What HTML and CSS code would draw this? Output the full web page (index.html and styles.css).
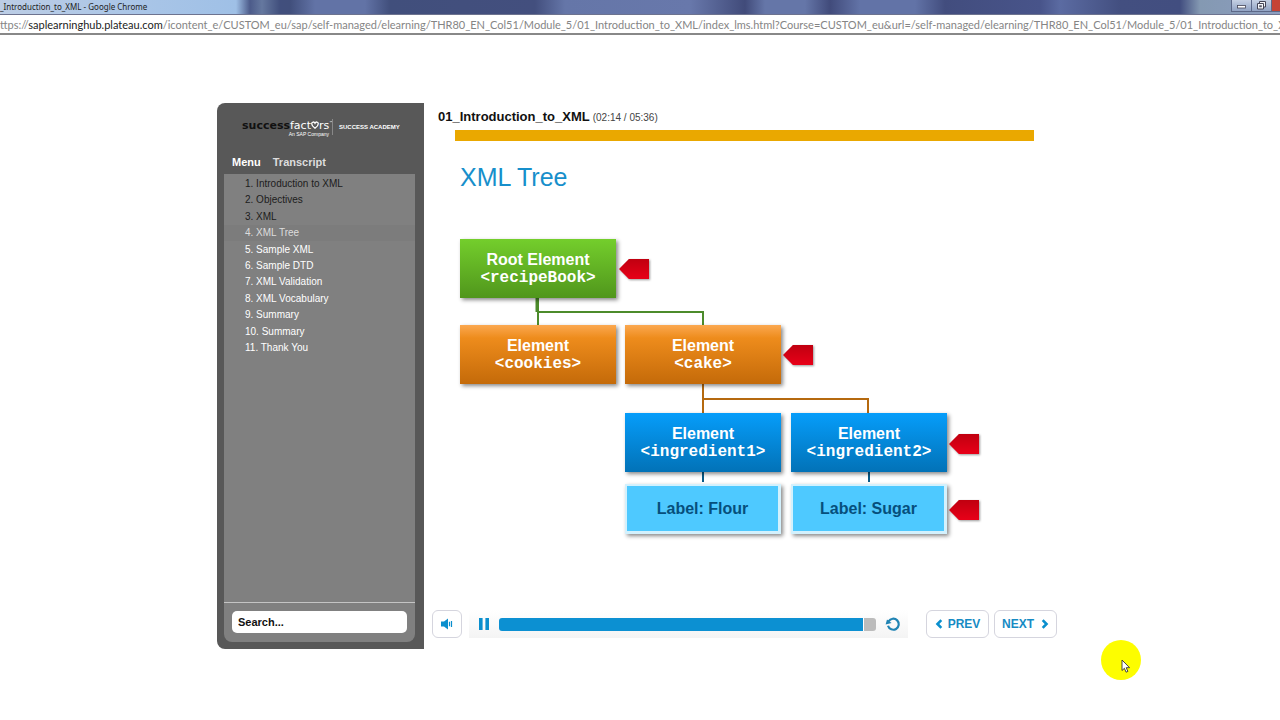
FILE: index.html
```html
<!DOCTYPE html>
<html lang="en">
<head>
<meta charset="utf-8">
<title>01_Introduction_to_XML</title>
<link rel="stylesheet" href="styles.css">
</head>
<body>
<header class="window">
  <div class="titlebar">
    <span class="window-title">_Introduction_to_XML - Google Chrome</span>
    <div class="window-buttons">
      <button class="win-btn" aria-label="Minimize"><svg width="20" height="11" viewBox="0 0 20 11"><rect x="5.500" y="5.500" width="8" height="2.500" fill="#fff" stroke="#445" stroke-width=".8"/></svg></button>
      <button class="win-btn" aria-label="Restore"><svg width="19" height="11" viewBox="0 0 19 11"><path d="M7.500 3V1.500h6v5.500H12M5.500 3.500h6v5.500h-6z" fill="#f4f6fa" stroke="#445"/><path d="M7.500 5.500h2v1.500h-2z" fill="#556" stroke="#556" stroke-width=".5"/></svg></button>
      <button class="win-btn win-close" aria-label="Close"></button>
    </div>
  </div>
  <div class="address">ttps://<span class="host">saplearninghub.plateau.com</span>/icontent_e/CUSTOM_eu/sap/self-managed/elearning/THR80_EN_Col51/Module_5/01_Introduction_to_XML/index_lms.html?Course=CUSTOM_eu&amp;url=/self-managed/elearning/THR80_EN_Col51/Module_5/01_Introduction_to_XM</div>
</header>

<main class="player">
  <aside class="sidebar">
    <div class="brand">
      <div class="logo">
        <div class="wordmark"><span class="success">success</span>fact<svg class="heart" width="8" height="8" viewBox="0 0 8 8"><path d="M4 7.200C1.800 5.600.7 4.300.7 2.700.7.700 3.200.4 4 2.200 4.800.4 7.300.7 7.300 2.700 7.300 4.300 6.200 5.600 4 7.200z" fill="none" stroke="#fff" stroke-width="1.300"/></svg>rs<span class="tm">™</span></div>
        <div class="tagline">An SAP Company</div>
      </div>
      <div class="academy">SUCCESS ACADEMY</div>
    </div>
    <nav class="tabs">
      <button class="tab">Menu</button>
      <button class="tab tab-idle">Transcript</button>
    </nav>
    <div class="panel">
      <ul class="menu">
        <li><a class="seen" href="#1">1. Introduction to XML</a></li>
        <li><a class="seen" href="#2">2. Objectives</a></li>
        <li><a class="seen" href="#3">3. XML</a></li>
        <li class="current"><a href="#4">4. XML Tree</a></li>
        <li><a href="#5">5. Sample XML</a></li>
        <li><a href="#6">6. Sample DTD</a></li>
        <li><a href="#7">7. XML Validation</a></li>
        <li><a href="#8">8. XML Vocabulary</a></li>
        <li><a href="#9">9. Summary</a></li>
        <li><a href="#10">10. Summary</a></li>
        <li><a href="#11">11. Thank You</a></li>
      </ul>
      <form class="search"><input class="search-box" type="text" aria-label="Search" placeholder="Search..."></form>
    </div>
  </aside>

  <section class="content">
    <div class="course"><h1 class="course-title">01_Introduction_to_XML</h1><span class="time">(02:14 / 05:36)</span></div>
    <div class="slide">
      <h2 class="slide-title">XML Tree</h2>
      <div class="diagram">
        <svg class="links" width="520" height="300" viewBox="0 0 520 300" fill="none" stroke-width="2">
          <path d="M78 59v27M78 73H243v13" stroke="#4c8b2b"/><path d="M77 59v14" stroke="#4c8b2b" stroke-width="3"/>
          <path d="M243 145v29M243 160H408v14" stroke="#b5690f"/>
          <path d="M243 233v10M409 233v10" stroke="#075a87"/>
        </svg>
        <div class="node root">Root Element<code>&lt;recipeBook&gt;</code></div>
        <div class="node orange cookies">Element<code>&lt;cookies&gt;</code></div>
        <div class="node orange cake">Element<code>&lt;cake&gt;</code></div>
        <div class="node blue ingredient1">Element<code>&lt;ingredient1&gt;</code></div>
        <div class="node blue ingredient2">Element<code>&lt;ingredient2&gt;</code></div>
        <div class="node label flour">Label: Flour</div>
        <div class="node label sugar">Label: Sugar</div>
        <div class="arrow arrow-root"><i></i></div>
        <div class="arrow arrow-cake"><i></i></div>
        <div class="arrow arrow-ingredient"><i></i></div>
        <div class="arrow arrow-label"><i></i></div>
      </div>
    </div>
    <div class="controls">
      <button class="btn volume" aria-label="Volume"><svg width="14" height="14" viewBox="0 0 14 14"><path d="M1 4.500h3L8 1.500v11L4 9.500H1z" fill="#0a8fce"/><path d="M9.500 4.800v4.400M11.500 4v6" stroke="#0a8fce" stroke-width="1.200"/></svg></button>
      <div class="transport">
        <button class="plain" aria-label="Pause"><svg width="12" height="14" viewBox="0 0 12 14"><path d="M1 1h3.600v12H1zM7.400 1H11v12H7.400z" fill="#0a8fce"/></svg></button>
        <input class="seek" type="range" min="0" max="1000" value="965" aria-label="Position">
        <button class="plain" aria-label="Replay"><svg width="16" height="16" viewBox="0 0 16 16"><path d="M3.600 5.300A5.500 5.500 0 1 1 3 9.800" fill="none" stroke="#2084b4" stroke-width="2.200"/><path d="M.6 8.400 2 3.400 6.600 7z" fill="#2084b4"/></svg></button>
      </div>
      <button class="btn step prev"><svg width="8" height="10" viewBox="0 0 8 10"><path d="M6.300 1.200 2.500 5l3.800 3.800" fill="none" stroke="#0a8fce" stroke-width="2.600"/></svg>PREV</button>
      <button class="btn step next">NEXT<svg width="8" height="10" viewBox="0 0 8 10"><path d="M1.700 1.200 5.500 5 1.700 8.800" fill="none" stroke="#0a8fce" stroke-width="2.600"/></svg></button>
    </div>
  </section>
</main>

<div class="pointer"><svg width="10" height="14" viewBox="0 0 10 14"><path d="M1 1v10.500l2.400-2.200 1.700 3.900 1.800-.8-1.700-3.700h3.400z" fill="#fff" stroke="#333" stroke-width=".9"/></svg></div>
</body>
</html>
```
FILE: styles.css
```css
* { box-sizing: border-box; }
body { margin: 0; background: #fff; font-family: "Liberation Sans", Arial, sans-serif; overflow: hidden; }
button { margin: 0; padding: 0; border: 0; background: none; font: inherit; color: inherit; }
svg { display: block; flex: none; }

.titlebar {
  display: flex; justify-content: space-between; height: 15px; border-bottom: 1px solid #6d738f;
  background: linear-gradient(90deg, #bccde5 0, #a9c5e7 140px, #9fc0e6 236px, #4c5b8a 250px, #65789f 262px, #414f7d 280px, #414f7c 290px, #6273a6 315px, #6273a6 365px, #414f7c 390px, #434f7e 535px, #6576a8 565px, #6878ab 690px, #414b7a 745px, #6576a8 765px, #6576a8 805px, #414b7b 830px, #6273a7 860px, #6273a7 915px, #424d7e 945px, #48548a 1040px, #5b6ba2 1060px, #434f80 1120px, #424e80 1180px, #8499b2 1200px, #8c9dc0 100%);
}
.window-title { font: 8px/14px "Noto Sans", sans-serif; color: #222; white-space: nowrap; }
.window-buttons { display: flex; height: 12px; }
.win-btn { width: 20px; background: linear-gradient(#c5d0e3, #91a3c4); border: solid #5c6888; border-width: 0 0 1px 1px; }
.win-close { width: 9px; background: #c54336; }
.address {
  height: 20px; border-bottom: 2px solid #888; overflow: hidden; white-space: nowrap;
  font: 11px/19px Lato, sans-serif; color: #858585;
}
.host { color: #222; }

.player { display: grid; grid-template-columns: 207px 1fr; padding: 68px 223px 0 217px; }
.sidebar {
  display: flex; flex-direction: column; padding: 0 9px 7px 7px;
  background: #585858; border-radius: 8px 0 0 8px;
}
.brand { display: flex; align-items: flex-start; gap: 3px; padding: 16px 0 0 18px; height: 51px; color: #fff; }
.logo { width: 87px; }
.wordmark { display: flex; align-items: baseline; font: 11px/13px "DejaVu Sans", sans-serif; }
.success { font-weight: bold; color: #111; }
.tm { font-size: 4px; align-self: flex-start; line-height: 8px; }
.tagline { text-align: right; font-size: 5px; line-height: 5px; white-space: nowrap; }
.academy { border-left: 1px solid #888; padding-left: 6px; font-weight: bold; font-size: 6px; line-height: 16px; white-space: nowrap; }
.tabs { display: flex; gap: 12px; padding-left: 8px; font-weight: bold; font-size: 11px; line-height: 16px; height: 20px; color: #fff; align-items: flex-start; }
.tab-idle { color: #ddd; }
.panel { display: flex; flex-direction: column; flex: 1; background: #808080; border-radius: 0 0 8px 8px; }
.menu {
  display: flex; flex-direction: column; justify-content: space-between;
  margin: 0; padding: 2px 0 0; height: 182px; list-style: none; font-size: 10px; line-height: 16px;
}
.menu li { padding-left: 21px; }
.menu a { color: #fff; text-decoration: none; }
.menu .seen { color: #1c1c1c; }
.menu .current { background: #7c7c7c; }
.menu .current a { color: #ddd; }
.search { margin-top: auto; padding: 8px 8px 9px; border-top: 1px solid #c4c4c4; display: flex; }
.search-box { width: 100%; height: 22px; border: 0; border-radius: 5px; padding: 0 6px; background: #fff; font: bold 11px "Liberation Sans", Arial, sans-serif; }
.search-box::placeholder { color: #111; opacity: 1; }

.content { display: flex; flex-direction: column; min-width: 0; }
.course { display: flex; align-items: baseline; gap: 3px; padding: 5px 0 0 14px; line-height: 18px; height: 27px; }
.course-title { margin: 0; font-size: 13px; color: #111; }
.time { font-size: 10px; color: #444; }
.slide { margin: 0 23px 0 31px; border-top: 11px solid #eaa800; padding: 21px 0 0 5px; }
.slide-title { margin: 0; font-weight: normal; font-size: 25px; line-height: 30px; color: #178fcb; }
.diagram { position: relative; height: 364px; margin-top: 47px; }
.links { position: absolute; left: 0; top: 0; }
.node {
  position: absolute; display: flex; flex-direction: column; align-items: center; justify-content: center;
  width: 156px; height: 59px; font-weight: bold; font-size: 16px; line-height: 19px; color: #fff;
  box-shadow: 2px 2px 4px #0007;
}
.node code { font: bold 16px/19px "Liberation Mono", monospace; }
.root { left: 0; top: 0; background: linear-gradient(#74ce2c, #50961c); }
.orange { top: 86px; background: linear-gradient(#fba850, #ee8c1c 22%, #c46a09); }
.blue { top: 174px; background: linear-gradient(#069dfa, #0272b7); }
.label { top: 245px; height: 50px; background: #4ec9ff; color: #064f7c; border: 3px solid #d3f1fd; border-width: 2px 3px 3px 2px; }
.cookies { left: 0; }
.cake, .ingredient1, .flour { left: 165px; }
.ingredient2, .sugar { left: 331px; }
.arrow { position: absolute; width: 30px; height: 20px; filter: drop-shadow(1px 1px 1px #0006); }
.arrow i { display: block; height: 100%; background: linear-gradient(#c00010, #e80018); clip-path: polygon(0 50%, 33% 0, 100% 0, 100% 100%, 33% 100%); }
.arrow-root { left: 159px; top: 20px; }
.arrow-cake { left: 323px; top: 106px; }
.arrow-ingredient { left: 489px; top: 195px; }
.arrow-label { left: 489px; top: 261px; }

.controls { display: flex; height: 39px; margin-top: 7px; padding-left: 8px; align-items: flex-start; }
.btn {
  display: flex; align-items: center; justify-content: center; height: 28px;
  border: 1px solid #d5d5de; border-radius: 6px; background: #fff; color: #168bc4; font-weight: bold; font-size: 12px;
}
.volume { width: 30px; margin-right: 7px; }
.transport { display: flex; flex: 1; align-items: center; gap: 9px; height: 28px; padding: 0 7px 0 9px; margin-right: 18px; background: linear-gradient(#fff, #f4f4f4); }
.seek {
  appearance: none; flex: 1; min-width: 0; height: 13px; margin: 0; border-radius: 3px;
  background: linear-gradient(90deg, #0c90d2 0, #0c90d2 calc(100% - 13px), #fff calc(100% - 13px), #fff calc(100% - 12px), #bcbcbc calc(100% - 12px));
}
.seek::-webkit-slider-thumb { appearance: none; width: 1px; height: 13px; background: transparent; }
.step { width: 63px; gap: 5px; }
.next { margin-left: 5px; gap: 7px; }

.pointer {
  position: absolute; left: 1101px; top: 640px; width: 40px; height: 40px; border-radius: 50%;
  background: #fdfd00; padding: 19px 0 0 20px;
}
```
